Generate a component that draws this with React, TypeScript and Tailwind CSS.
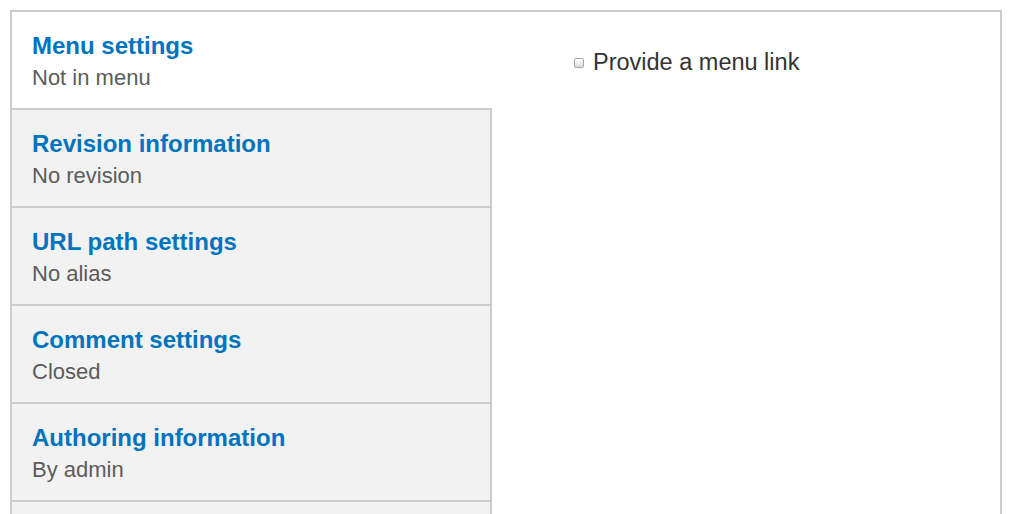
const tabs = [
  { title: 'Menu settings', summary: 'Not in menu' },
  { title: 'Revision information', summary: 'No revision' },
  { title: 'URL path settings', summary: 'No alias' },
  { title: 'Comment settings', summary: 'Closed' },
  { title: 'Authoring information', summary: 'By admin' },
];

export default function App() {
  return (
    <div className="h-[514px] overflow-hidden bg-white pl-[10px] pt-[10px] font-['Liberation_Sans',Arial,sans-serif]">
      <div className="flex w-[992px] border-2 border-b-0 border-[#cccccc]">
        <ul className="w-[480px] shrink-0">
          {tabs.map((tab, i) => (
            <li
              key={tab.title}
              className={
                i === 0
                  ? 'h-[98px] border-b-2 border-[#cccccc] bg-white pl-[20px] pt-[20px]'
                  : 'h-[98px] border-b-2 border-r-2 border-[#cccccc] bg-[#f2f2f2] pl-[20px] pt-[20px]'
              }
            >
              <div className="text-[24px] font-bold leading-[28px] text-[#0074bd]">{tab.title}</div>
              <div className="text-[22px] leading-[36px] text-[#5c5c5c]">{tab.summary}</div>
            </li>
          ))}
          <li className="h-[98px] border-r-2 border-[#cccccc] bg-[#f2f2f2]" />
        </ul>
        <div className="flex-1 pl-[82px] pt-[36px]">
          <label className="flex items-center gap-[9px] text-[23.5px] leading-[28px] text-[#333333]">
            <span className="mt-[2px] h-[10px] w-[10px] rounded-[2px] border border-[#a8a8a8] bg-gradient-to-b from-[#ffffff] to-[#dcdcdc]" />
            Provide a menu link
          </label>
        </div>
      </div>
    </div>
  );
}
